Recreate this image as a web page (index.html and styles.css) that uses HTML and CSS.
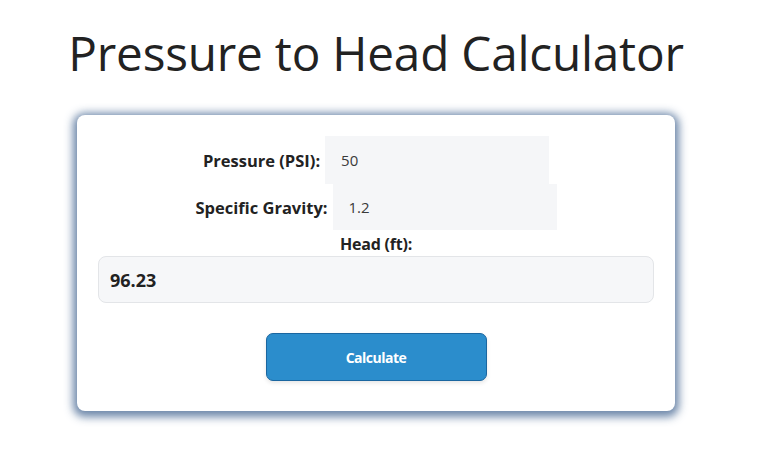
FILE: index.html
```html
<!DOCTYPE html>
<html lang="en">
<head>
<meta charset="utf-8">
<title>Pressure to Head Calculator</title>
<link rel="stylesheet" href="styles.css">
</head>
<body>
<main class="page">
  <h1 class="title">Pressure to Head Calculator</h1>
  <div class="card">
    <div class="row">
      <label class="label" for="psi">Pressure (PSI):</label>
      <input class="field" id="psi" type="text" value="50">
    </div>
    <div class="row">
      <label class="label" for="sg">Specific Gravity:</label>
      <input class="field" id="sg" type="text" value="1.2">
    </div>
    <div class="head-label">Head (ft):</div>
    <div class="result">96.23</div>
    <div class="actions">
      <button class="btn" type="button">Calculate</button>
    </div>
  </div>
</main>
</body>
</html>
```
FILE: styles.css
```css
* { box-sizing: border-box; }
html, body { margin: 0; padding: 0; background: #ffffff; }
body {
  font-family: "Open Sans", "Noto Sans", sans-serif;
  color: #222;
  min-height: 464px;
}
.page {
  width: 598px;
  margin-left: 77px;
  padding-bottom: 40px;
}
.title {
  margin: 0;
  padding-top: 20px;
  height: 115px;
  font-weight: 400;
  font-size: 47.7px;
  color: #222;
  display: flex;
  justify-content: center;
  white-space: nowrap;
  letter-spacing: -0.2px;
}
.card {
  width: 598px;
  height: 296px;
  border-radius: 8px;
  background: #fff;
  box-shadow: 0 2px 8px 4px rgba(85, 115, 155, 0.85);
  padding: 21px 21px 0 21px;
}
.row {
  display: flex;
  justify-content: center;
  align-items: center;
  height: 48px;
}
.row + .row { height: 46px; }
.label {
  font-weight: 700;
  font-size: 16.5px;
  color: #222;
  margin-right: 5px;
}
.field {
  width: 224px;
  height: 100%;
  border: none;
  background: #f5f6f8;
  font-family: inherit;
  font-size: 15px;
  color: #3a3a3a;
  padding: 0 16px;
  outline: none;
}
.head-label {
  text-align: center;
  font-weight: 700;
  font-size: 16px;
  letter-spacing: -0.2px;
  margin-top: 3px;
  line-height: 22px;
}
.result {
  margin-top: 1px;
  height: 47px;
  border: 1px solid #e3e5e8;
  border-radius: 8px;
  background: #f6f7f9;
  font-weight: 700;
  font-size: 18px;
  display: flex;
  align-items: center;
  padding-left: 11px;
  color: #222;
}
.actions {
  display: flex;
  justify-content: center;
  margin-top: 30px;
}
.btn {
  width: 221px;
  height: 48px;
  background: #2b8dcc;
  border: 1.5px solid #1a66a0;
  border-radius: 7px;
  color: #fff;
  font-family: inherit;
  font-weight: 700;
  font-size: 14px;
  letter-spacing: -0.5px;
  box-shadow: 0 2px 4px rgba(0,0,0,0.1);
}
```
